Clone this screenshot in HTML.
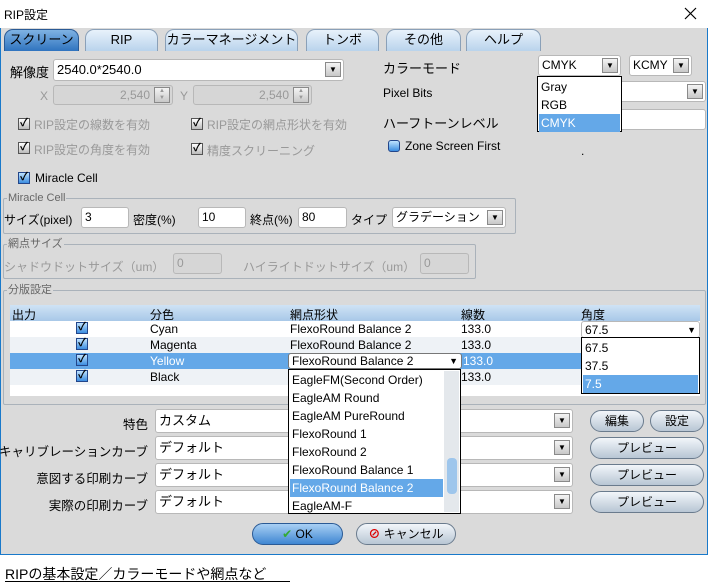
<!DOCTYPE html>
<html><head><meta charset="utf-8"><style>
*{box-sizing:border-box;margin:0;padding:0}
body{width:708px;height:586px;position:relative;background:#fff;font-family:"Liberation Sans","Noto Sans CJK JP",sans-serif;font-size:12px;color:#000;overflow:hidden}
.a{position:absolute;white-space:nowrap}
.win{position:absolute;left:0;top:0;width:708px;height:555px;border:1px solid #1979ca;border-top:none;background:#dadada}
.title{position:absolute;left:0;top:0;width:708px;height:28px;background:#fff}
.tab{position:absolute;top:29px;height:22px;border:1px solid #8aa0b8;border-bottom:none;border-radius:9px 9px 0 0;background:linear-gradient(#e8f2fb,#b9d3ec);text-align:center;line-height:20px;font-size:13px}
.tab.sel{background:linear-gradient(#7fb2e3,#2f73bf);border-color:#2a5a95}
.inp{position:absolute;background:#fff;border:1px solid #b8b8b8;border-radius:3px;height:21px;line-height:19px;padding-left:3px;font-size:12px}
.dis{background:#d6d6d6;color:#999;text-align:right;padding-right:22px}
.arr{position:absolute;right:2px;top:2px;width:16px;height:15px;border:1px solid #8a8a8a;background:linear-gradient(#f4f4f4,#c8c8c8);font-size:8px;text-align:center;line-height:14px}
.cb{position:absolute;width:12px;height:12px;border:1px solid #555;background:linear-gradient(#fff,#bbb);font-size:11px;line-height:9px;text-align:center;font-weight:bold}
.cbb{background:linear-gradient(#bfe3ff,#3b8de0);border-color:#23468a;color:#000}
.grp{position:absolute;border:1px solid #aab2ba;border-radius:2px}
.gl{position:absolute;background:#dadada;color:#666;font-size:11px;padding:0 1px;line-height:12px}
.g{color:#999}
.btn{position:absolute;height:22px;border:1px solid #6a7b8d;border-radius:11px;background:linear-gradient(#f2f6fa,#b8c6d4);text-align:center;line-height:20px;font-size:12px}
.list{position:absolute;background:#fff;border:1px solid #000}
.it{position:absolute;left:1px;right:1px;height:18px;line-height:18px;padding-left:2px}
.hl{background:#64a8e8;color:#fff}
.lb{position:absolute;right:560px;text-align:right;white-space:nowrap;font-size:12.5px}
</style></head><body>
<div class="win"></div>
<div class="title"></div>
<div class="a" style="left:4px;top:6px;font-size:12px">RIP設定</div>
<svg class="a" style="left:684px;top:7px" width="13" height="13"><path d="M1 1L12 12M12 1L1 12" stroke="#000" stroke-width="1.2"/></svg>

<div class="tab sel" style="left:4px;width:75px">スクリーン</div>
<div class="tab" style="left:85px;width:73px">RIP</div>
<div class="tab" style="left:165px;width:133px">カラーマネージメント</div>
<div class="tab" style="left:306px;width:73px">トンボ</div>
<div class="tab" style="left:386px;width:75px">その他</div>
<div class="tab" style="left:466px;width:75px">ヘルプ</div>

<div class="a" style="left:10px;top:62px;font-size:13px">解像度</div>
<div class="inp" style="left:53px;top:59px;width:291px;height:22px;font-size:13px">2540.0*2540.0<div class="arr">▼</div></div>
<div class="a g" style="left:40px;top:89px">X</div>
<div class="inp dis" style="left:53px;top:85px;width:120px;height:20px">2,540<div class="arr" style="top:1px;height:16px;font-size:6px;line-height:7px">▲<br>▼</div></div>
<div class="a g" style="left:180px;top:89px">Y</div>
<div class="inp dis" style="left:193px;top:85px;width:119px;height:20px">2,540<div class="arr" style="top:1px;height:16px;font-size:6px;line-height:7px">▲<br>▼</div></div>

<div class="cb" style="left:18px;top:118px">✓</div><div class="a g" style="left:34px;top:116px">RIP設定の線数を有効</div>
<div class="cb" style="left:191px;top:118px">✓</div><div class="a g" style="left:207px;top:116px">RIP設定の網点形状を有効</div>
<div class="cb" style="left:18px;top:142px">✓</div><div class="a g" style="left:34px;top:141px">RIP設定の角度を有効</div>
<div class="cb" style="left:191px;top:143px">✓</div><div class="a g" style="left:207px;top:142px">精度スクリーニング</div>
<div class="cb cbb" style="left:18px;top:172px">✓</div><div class="a" style="left:35px;top:171px;font-size:12px">Miracle Cell</div>

<div class="a" style="left:383px;top:58px;font-size:13px">カラーモード</div>
<div class="inp" style="left:538px;top:55px;width:83px">CMYK<div class="arr">▼</div></div>
<div class="inp" style="left:629px;top:55px;width:63px">KCMY<div class="arr">▼</div></div>
<div class="a" style="left:383px;top:86px">Pixel Bits</div>
<div class="inp" style="left:600px;top:81px;width:106px"><div class="arr">▼</div></div>
<div class="a" style="left:383px;top:113px;font-size:13px">ハーフトーンレベル</div>
<div class="inp" style="left:610px;top:109px;width:96px"></div>
<div class="list" style="left:537px;top:76px;width:85px;height:56px">
<div class="it" style="top:1px">Gray</div><div class="it" style="top:19px">RGB</div><div class="it hl" style="top:37px">CMYK</div></div>
<div class="cb cbb" style="left:388px;top:140px;border-radius:3px"></div><div class="a" style="left:405px;top:139px">Zone Screen First</div>
<div class="a" style="left:581px;top:144px">.</div>

<div class="grp" style="left:3px;top:198px;width:513px;height:36px"></div>
<div class="gl" style="left:7px;top:192px">Miracle Cell</div>
<div class="a" style="left:4px;top:211px">サイズ(pixel)</div>
<div class="inp" style="left:81px;top:207px;width:48px">3</div>
<div class="a" style="left:133px;top:211px">密度(%)</div>
<div class="inp" style="left:198px;top:207px;width:48px">10</div>
<div class="a" style="left:250px;top:211px">終点(%)</div>
<div class="inp" style="left:298px;top:207px;width:49px">80</div>
<div class="a" style="left:351px;top:211px">タイプ</div>
<div class="inp" style="left:392px;top:207px;width:114px">グラデーション<div class="arr">▼</div></div>

<div class="grp" style="left:3px;top:244px;width:473px;height:35px"></div>
<div class="gl" style="left:7px;top:238px">網点サイズ</div>
<div class="a g" style="left:4px;top:258px">シャドウドットサイズ（um）</div>
<div class="inp" style="left:173px;top:253px;width:49px;background:#d6d6d6;color:#999">0</div>
<div class="a g" style="left:243px;top:258px">ハイライトドットサイズ（um）</div>
<div class="inp" style="left:420px;top:253px;width:49px;background:#d6d6d6;color:#999">0</div>

<div class="grp" style="left:3px;top:290px;width:703px;height:115px"></div>
<div class="gl" style="left:7px;top:284px">分版設定</div>
<div class="a" style="left:10px;top:305px;width:690px;height:91px;background:#fff"></div>
<div class="a" style="left:10px;top:305px;width:690px;height:16px;background:linear-gradient(#cfe3f5,#a8c8e8)"></div>
<div class="a" style="left:10px;top:337px;width:690px;height:16px;background:#eef2f6"></div>
<div class="a" style="left:10px;top:353px;width:690px;height:16px;background:#64a8e8"></div>
<div class="a" style="left:10px;top:369px;width:690px;height:16px;background:#eef2f6"></div>
<div class="a" style="left:12px;top:306px">出力</div><div class="a" style="left:150px;top:306px">分色</div><div class="a" style="left:290px;top:306px">網点形状</div><div class="a" style="left:461px;top:306px">線数</div><div class="a" style="left:581px;top:306px">角度</div>
<div class="cb cbb" style="left:76px;top:322px">✓</div><div class="a" style="left:150px;top:322px">Cyan</div><div class="a" style="left:290px;top:322px">FlexoRound Balance 2</div><div class="a" style="left:461px;top:322px">133.0</div>
<div class="cb cbb" style="left:76px;top:338px">✓</div><div class="a" style="left:150px;top:338px">Magenta</div><div class="a" style="left:290px;top:338px">FlexoRound Balance 2</div><div class="a" style="left:461px;top:338px">133.0</div>
<div class="cb cbb" style="left:76px;top:354px">✓</div><div class="a" style="left:150px;top:354px;color:#fff">Yellow</div><div class="a" style="left:463px;top:354px;color:#fff">133.0</div>
<div class="cb cbb" style="left:76px;top:370px">✓</div><div class="a" style="left:150px;top:370px">Black</div><div class="a" style="left:461px;top:370px">133.0</div>
<div class="inp" style="left:581px;top:321px;width:119px;height:17px;line-height:16px">67.5<span class="a" style="right:3px;top:0;font-size:9px">▼</span></div>
<div class="list" style="left:581px;top:337px;width:119px;height:57px">
<div class="it" style="top:1px">67.5</div><div class="it" style="top:19px">37.5</div><div class="it hl" style="top:37px">7.5</div></div>

<div class="lb" style="top:414px">特色</div>
<div class="lb" style="top:441px">キャリブレーションカーブ</div>
<div class="lb" style="top:468px">意図する印刷カーブ</div>
<div class="lb" style="top:495px">実際の印刷カーブ</div>
<div class="inp" style="left:155px;top:409px;width:418px;height:24px;font-size:13px;line-height:22px">カスタム<div class="arr" style="top:3px">▼</div></div>
<div class="inp" style="left:155px;top:436px;width:418px;height:24px;font-size:13px;line-height:22px">デフォルト<div class="arr" style="top:3px">▼</div></div>
<div class="inp" style="left:155px;top:463px;width:418px;height:24px;font-size:13px;line-height:22px">デフォルト<div class="arr" style="top:3px">▼</div></div>
<div class="inp" style="left:155px;top:490px;width:418px;height:24px;font-size:13px;line-height:22px">デフォルト<div class="arr" style="top:3px">▼</div></div>
<div class="btn" style="left:590px;top:410px;width:54px">編集</div>
<div class="btn" style="left:650px;top:410px;width:54px">設定</div>
<div class="btn" style="left:590px;top:437px;width:114px">プレビュー</div>
<div class="btn" style="left:590px;top:464px;width:114px">プレビュー</div>
<div class="btn" style="left:590px;top:491px;width:114px">プレビュー</div>

<div class="inp" style="left:288px;top:353px;width:174px;height:16px;line-height:15px;border-color:#777">FlexoRound Balance 2<span class="a" style="right:3px;top:0;font-size:9px">▼</span></div>
<div class="list" style="left:288px;top:369px;width:173px;height:145px">
<div class="it" style="top:1px;right:17px">EagleFM(Second Order)</div>
<div class="it" style="top:19px;right:17px">EagleAM Round</div>
<div class="it" style="top:37px;right:17px">EagleAM PureRound</div>
<div class="it" style="top:55px;right:17px">FlexoRound 1</div>
<div class="it" style="top:73px;right:17px">FlexoRound 2</div>
<div class="it" style="top:91px;right:17px">FlexoRound Balance 1</div>
<div class="it hl" style="top:109px;right:17px">FlexoRound Balance 2</div>
<div class="it" style="top:127px;right:17px">EagleAM-F</div>
<div class="a" style="right:1px;top:1px;width:15px;height:141px;background:#e4e8ec"></div>
<div class="a" style="right:3px;top:88px;width:10px;height:36px;background:#9ec6ec;border-radius:4px"></div>
</div>

<div class="btn" style="left:252px;top:523px;width:91px;background:linear-gradient(#a9d0f4,#3f86d2);border-color:#2a5a95"><span style="color:#3a3">✔</span> OK</div>
<div class="btn" style="left:356px;top:523px;width:100px"><span style="color:#d00;font-weight:bold">⊘</span> キャンセル</div>

<div class="a" style="left:5px;top:564px;font-size:14px">RIPの基本設定／カラーモードや網点など</div>
<div class="a" style="left:5px;top:581px;width:285px;height:1px;background:#000"></div>
</body></html>
